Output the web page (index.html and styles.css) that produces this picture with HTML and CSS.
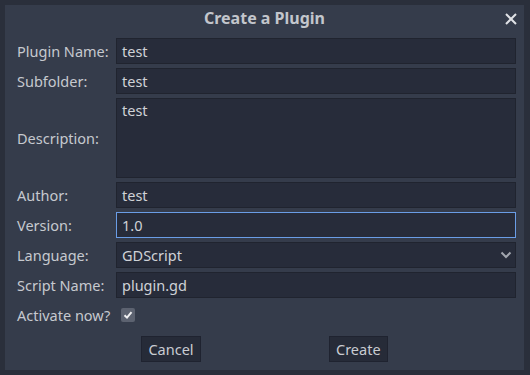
FILE: index.html
```html
<!DOCTYPE HTML>
<html lang="en">
<head>
    <title>Create a Plugin</title>
    <meta charset="utf-8">
    <link rel="stylesheet" href="styles.css">
</head>
<body>

<div id="dialog">
    <div class="titlebar">
        <span class="title">Create a Plugin</span>
        <span class="close">
            <svg width="12" height="12" viewBox="0 0 12 12"><path d="M1 1 L11 11 M11 1 L1 11" stroke="#e0e2e6" stroke-width="2" fill="none"/></svg>
        </span>
    </div>

    <div class="form">
        <label>Plugin Name:</label>
        <div class="field">test</div>

        <label>Subfolder:</label>
        <div class="field">test</div>

        <label>Description:</label>
        <div class="field area">test</div>

        <label>Author:</label>
        <div class="field">test</div>

        <label>Version:</label>
        <div class="field focus">1.0</div>

        <label>Language:</label>
        <div class="field select">
            <span>GDScript</span>
            <svg width="12" height="8" viewBox="0 0 12 8"><path d="M1.5 1.5 L6 6 L10.5 1.5" stroke="#a2a6ae" stroke-width="2" fill="none"/></svg>
        </div>

        <label>Script Name:</label>
        <div class="field">plugin.gd</div>

        <label>Activate now?</label>
        <div class="checkrow">
            <span class="check">
                <svg width="14" height="14" viewBox="0 0 14 14"><path d="M3.5 7.2 L6 9.6 L10.5 4.2" stroke="#f0f0f2" stroke-width="2" fill="none"/></svg>
            </span>
        </div>
    </div>

    <div class="buttons">
        <span class="button">Cancel</span>
        <span class="button">Create</span>
    </div>
</div>

</body>
</html>
```

FILE: styles.css
```css
html {
    height: 100%;
}
body {
    margin: 0;
    padding: 0;
    background: #2a2f3b;
    color: #c9ccd2;
    font-family: "Noto Sans", sans-serif;
    font-size: 14.5px;
    height: 100%;
}

#dialog {
    margin: 5px 6px 0 5px;
    height: 365px;
    box-sizing: border-box;
    background-color: #353c4b;
    padding: 0 8px 8px 8px;
    display: flex;
    flex-direction: column;
}

.titlebar {
    height: 33px;
    display: flex;
    align-items: center;
    justify-content: center;
    position: relative;
}

.title {
    font-weight: bold;
    font-size: 16px;
    color: #c3c6cc;
    margin-top: -7px;
}

.close {
    position: absolute;
    right: -1px;
    top: 8px;
    width: 12px;
    height: 12px;
    display: flex;
}

.form {
    display: grid;
    grid-template-columns: 103px 1fr;
    grid-template-rows: 26px 26px 80px;
    grid-auto-rows: 26px;
    row-gap: 4px;
}

.form label {
    display: flex;
    align-items: center;
    padding-left: 4px;
    color: #c6c9cf;
}

.field {
    box-sizing: border-box;
    background-color: #272c3a;
    border: 1px solid #20242f;
    padding: 0 6px 0 5px;
    display: flex;
    align-items: center;
    color: #cfd2d7;
}

.field.area {
    align-items: flex-start;
    padding-top: 1px;
}

.field.focus {
    border-color: #6a9de6;
}

.field.select {
    justify-content: space-between;
    padding-right: 3px;
}

.checkrow {
    display: flex;
    align-items: center;
    padding-left: 5px;
}

.check {
    width: 14px;
    height: 14px;
    border-radius: 2px;
    background-color: #5c6270;
    display: flex;
}

.buttons {
    margin-top: 8px;
    display: flex;
    justify-content: space-evenly;
}

.button {
    box-sizing: border-box;
    height: 26px;
    padding: 0 6px;
    background-color: #262b38;
    border: 1px solid #1f2330;
    display: flex;
    align-items: center;
    color: #c9ccd2;
}
```
